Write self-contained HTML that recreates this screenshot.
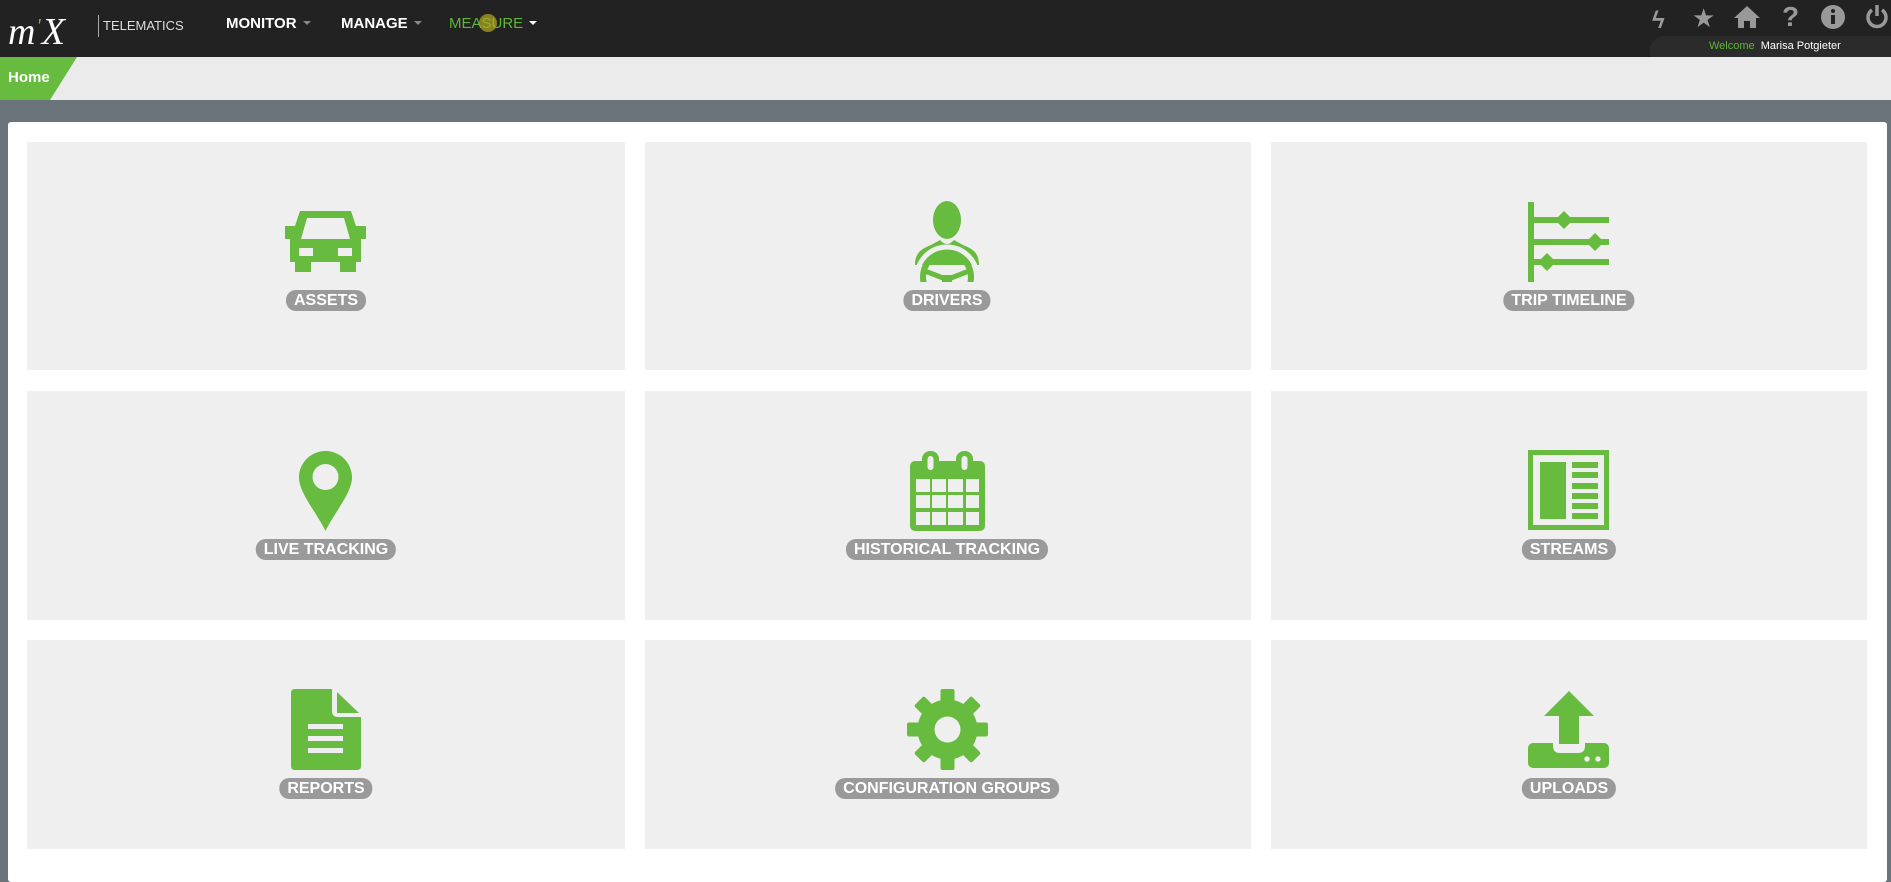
<!DOCTYPE html>
<html><head><meta charset="utf-8"><style>
*{margin:0;padding:0;box-sizing:border-box}
body{width:1891px;height:860px;overflow:hidden;background:#6b737b;font-family:"Liberation Sans",sans-serif;position:relative}
.hdr{position:absolute;left:0;top:0;width:1891px;height:57px;background:#222}
.bc{position:absolute;left:0;top:57px;width:1891px;height:43px;background:#ebebeb}
.panel{position:absolute;left:8px;top:122px;width:1879px;height:760px;background:#fff;border-radius:3px}
.tile{position:absolute;background:#efefef}
.lbl{position:absolute;transform:translateX(-50%);background:#9a9a9a;color:#fff;font-weight:bold;font-size:16px;line-height:21px;height:21px;padding:0 8px;border-radius:10px;white-space:nowrap}
svg.i{position:absolute}
.nav{position:absolute;top:15px;font-weight:bold;font-size:15px;color:#fff}
.car{display:inline-block;width:0;height:0;border-left:4px solid transparent;border-right:4px solid transparent;border-top:4px solid #888;margin-left:6px;vertical-align:3px}
</style></head><body>
<div class="hdr">
  <div style="position:absolute;left:8px;top:6px;color:#fff;font-family:'Liberation Serif',serif;font-style:italic;font-size:38px;line-height:40px;letter-spacing:1px">m<span style="color:#6abf40;font-size:20px;vertical-align:12px">'</span>X</div>
  <div style="position:absolute;left:98px;top:15px;height:22px;border-left:1px solid #aaa"></div>
  <div style="position:absolute;left:103px;top:18px;color:#ddd;font-size:13px">TELEMATICS</div>
  <div class="nav" style="left:226px">MONITOR<span class="car"></span></div>
  <div class="nav" style="left:341px">MANAGE<span class="car"></span></div>
  <div class="nav" style="left:449px;color:#5fb53a;font-weight:normal">MEASURE<span class="car" style="border-top-color:#fff"></span></div>
  <div style="position:absolute;left:479px;top:14px;width:18px;height:18px;border-radius:50%;background:rgba(180,170,30,.7)"></div>
  <div style="position:absolute;left:1652px;top:7px;color:#999;font-size:24px;font-weight:bold">ϟ</div>
  <div style="position:absolute;left:1692px;top:3px;color:#999;font-size:26px">★</div>
  <svg class="i" style="left:1734px;top:6px" width="26" height="22" viewBox="0 0 26 22"><path d="M13 0L26 12h-4v10h-6v-7h-6v7H4V12H0z" fill="#999"/></svg>
  <div style="position:absolute;left:1782px;top:1px;color:#999;font-size:28px;font-weight:bold">?</div>
  <svg class="i" style="left:1821px;top:5px" width="24" height="24" viewBox="0 0 24 24"><circle cx="12" cy="12" r="12" fill="#999"/><circle cx="12" cy="6" r="2" fill="#222"/><rect x="10" y="10" width="4" height="9" fill="#222"/></svg>
  <svg class="i" style="left:1865px;top:5px" width="24" height="24" viewBox="0 0 24 24"><path d="M7 5a9 9 0 1 0 10 0" fill="none" stroke="#999" stroke-width="3.5"/><rect x="10.3" y="0" width="3.4" height="11" fill="#999"/></svg>
  <div style="position:absolute;left:1650px;top:36px;width:241px;height:21px;background:#2b2b2b;border-top-left-radius:14px"></div>
  <div style="position:absolute;left:1709px;top:38px;font-size:11px;line-height:16px;color:#5fb53a">Welcome <span style="color:#fff;margin-left:3px">Marisa Potgieter</span></div>
</div>
<div class="bc"></div>
<svg class="i" style="left:0;top:57px" width="80" height="43"><polygon points="0,0 77,0 50,43 0,43" fill="#67bb3f"/></svg>
<div style="position:absolute;left:8px;top:69px;color:#fff;font-size:15px;font-weight:bold">Home</div>
<div class="panel"></div>
<div class="tile" style="left:27px;top:142px;width:598px;height:228px"></div>
<div class="tile" style="left:645px;top:142px;width:606px;height:228px"></div>
<div class="tile" style="left:1271px;top:142px;width:596px;height:228px"></div>
<div class="tile" style="left:27px;top:391px;width:598px;height:229px"></div>
<div class="tile" style="left:645px;top:391px;width:606px;height:229px"></div>
<div class="tile" style="left:1271px;top:391px;width:596px;height:229px"></div>
<div class="tile" style="left:27px;top:640px;width:598px;height:209px"></div>
<div class="tile" style="left:645px;top:640px;width:606px;height:209px"></div>
<div class="tile" style="left:1271px;top:640px;width:596px;height:209px"></div>

<!-- car -->
<svg class="i" style="left:285px;top:211px" width="81" height="61" viewBox="0 0 81 61"><polygon points="15,0 66,0 71,15 81,15 81,28 76,28 76,51 71,51 71,61 55,61 55,51 26,51 26,61 10,61 10,51 5,51 5,28 0,28 0,15 10,15" fill="#67bb3f"/><polygon points="22,7 59,7 65,28 16,28" fill="#efefef"/><rect x="14" y="37" width="14" height="8" fill="#efefef"/><rect x="53" y="37" width="14" height="8" fill="#efefef"/></svg>
<div class="lbl" style="left:326px;top:290px">ASSETS</div>
<!-- driver -->
<svg class="i" style="left:915px;top:201px" width="64" height="81" viewBox="0 0 64 81"><ellipse cx="32" cy="19" rx="14" ry="19" fill="#67bb3f"/><path d="M0,64 C0,52 6,48 16,44 L25,39 Q32,47 39,39 L48,44 C58,48 64,52 64,64Z" fill="#67bb3f"/><circle cx="32" cy="76" r="30" fill="none" stroke="#efefef" stroke-width="5"/><circle cx="32" cy="76" r="24" fill="none" stroke="#67bb3f" stroke-width="6"/><path d="M10,70 L28,77 M54,70 L36,77" stroke="#67bb3f" stroke-width="5"/><rect x="27" y="74" width="10" height="7" fill="#67bb3f"/></svg>
<div class="lbl" style="left:947px;top:290px">DRIVERS</div>
<!-- timeline -->
<svg class="i" style="left:1528px;top:202px" width="81" height="80" viewBox="0 0 81 80"><rect x="0" y="0" width="6" height="80" fill="#67bb3f"/><rect x="6" y="15" width="75" height="6" fill="#67bb3f"/><rect x="6" y="37" width="75" height="6" fill="#67bb3f"/><rect x="6" y="57" width="75" height="6" fill="#67bb3f"/><polygon points="36,9 45,18 36,27 27,18" fill="#67bb3f"/><polygon points="67,31 76,40 67,49 58,40" fill="#67bb3f"/><polygon points="19,51 28,60 19,69 10,60" fill="#67bb3f"/></svg>
<div class="lbl" style="left:1569px;top:290px">TRIP TIMELINE</div>
<!-- pin -->
<svg class="i" style="left:299px;top:451px" width="53" height="80" viewBox="0 0 53 80"><path d="M26.5,0 C11.9,0 0,11.9 0,26.5 C0,42 18,62 26.5,80 C35,62 53,42 53,26.5 C53,11.9 41.1,0 26.5,0Z" fill="#67bb3f"/><circle cx="26.5" cy="26" r="13" fill="#efefef"/></svg>
<div class="lbl" style="left:326px;top:539px">LIVE TRACKING</div>
<!-- calendar -->
<svg class="i" style="left:910px;top:451px" width="75" height="80" viewBox="0 0 75 80"><rect x="0" y="10" width="75" height="70" rx="5" fill="#67bb3f"/><rect x="12" y="0" width="17" height="24" rx="8" fill="#67bb3f"/><rect x="46" y="0" width="17" height="24" rx="8" fill="#67bb3f"/><rect x="17.5" y="5" width="6" height="14" rx="3" fill="#efefef"/><rect x="51.5" y="5" width="6" height="14" rx="3" fill="#efefef"/><g fill="#efefef"><rect x="6" y="28" width="14" height="13"/><rect x="22" y="28" width="14" height="13"/><rect x="38" y="28" width="15" height="13"/><rect x="56" y="28" width="13" height="13"/><rect x="6" y="44" width="14" height="13"/><rect x="22" y="44" width="14" height="13"/><rect x="38" y="44" width="15" height="13"/><rect x="56" y="44" width="13" height="13"/><rect x="6" y="61" width="14" height="13"/><rect x="22" y="61" width="14" height="13"/><rect x="38" y="61" width="15" height="13"/><rect x="56" y="61" width="13" height="13"/></g></svg>
<div class="lbl" style="left:947px;top:539px">HISTORICAL TRACKING</div>
<!-- streams -->
<svg class="i" style="left:1528px;top:450px" width="81" height="80" viewBox="0 0 81 80"><rect x="0" y="0" width="81" height="80" fill="#67bb3f"/><rect x="5" y="5" width="71" height="70" fill="#efefef"/><rect x="12" y="12" width="26" height="57" fill="#67bb3f"/><g fill="#67bb3f"><rect x="44" y="12" width="26" height="6"/><rect x="44" y="22" width="26" height="6"/><rect x="44" y="33" width="26" height="6"/><rect x="44" y="43" width="26" height="6"/><rect x="44" y="53" width="26" height="6"/><rect x="44" y="63" width="26" height="6"/></g></svg>
<div class="lbl" style="left:1569px;top:539px">STREAMS</div>
<!-- reports -->
<svg class="i" style="left:291px;top:689px" width="70" height="81" viewBox="0 0 70 81"><path d="M4,0 H41 V22 Q41,28 47,28 H70 V77 Q70,81 66,81 H4 Q0,81 0,77 V4 Q0,0 4,0Z" fill="#67bb3f"/><polygon points="46,3 68,24 46,24" fill="#67bb3f"/><g fill="#efefef"><rect x="17" y="35" width="35" height="5"/><rect x="17" y="47" width="35" height="5"/><rect x="17" y="59" width="35" height="5"/></g></svg>
<div class="lbl" style="left:326px;top:778px">REPORTS</div>
<!-- gear -->
<svg class="i" style="left:907px;top:689px" width="81" height="81" viewBox="-40.5 -40.5 81 81"><g fill="#67bb3f"><circle r="30"/><rect x="-7" y="-40.5" width="14" height="81" rx="2"/><rect x="-7" y="-40.5" width="14" height="81" rx="2" transform="rotate(45)"/><rect x="-7" y="-40.5" width="14" height="81" rx="2" transform="rotate(90)"/><rect x="-7" y="-40.5" width="14" height="81" rx="2" transform="rotate(135)"/></g><circle r="13" fill="#efefef"/></svg>
<div class="lbl" style="left:947px;top:778px">CONFIGURATION GROUPS</div>
<!-- upload -->
<svg class="i" style="left:1528px;top:691px" width="81" height="77" viewBox="0 0 81 77"><rect x="0" y="52" width="81" height="25" rx="5" fill="#67bb3f"/><path d="M25,51 H57 V55 Q57,62 50,62 H32 Q25,62 25,55Z" fill="#efefef"/><polygon points="41,0 66,25 51,25 51,53 31,53 31,25 16,25" fill="#67bb3f"/><circle cx="59" cy="68" r="2.7" fill="#efefef"/><circle cx="70" cy="68" r="2.7" fill="#efefef"/></svg>
<div class="lbl" style="left:1569px;top:778px">UPLOADS</div>
</body></html>
